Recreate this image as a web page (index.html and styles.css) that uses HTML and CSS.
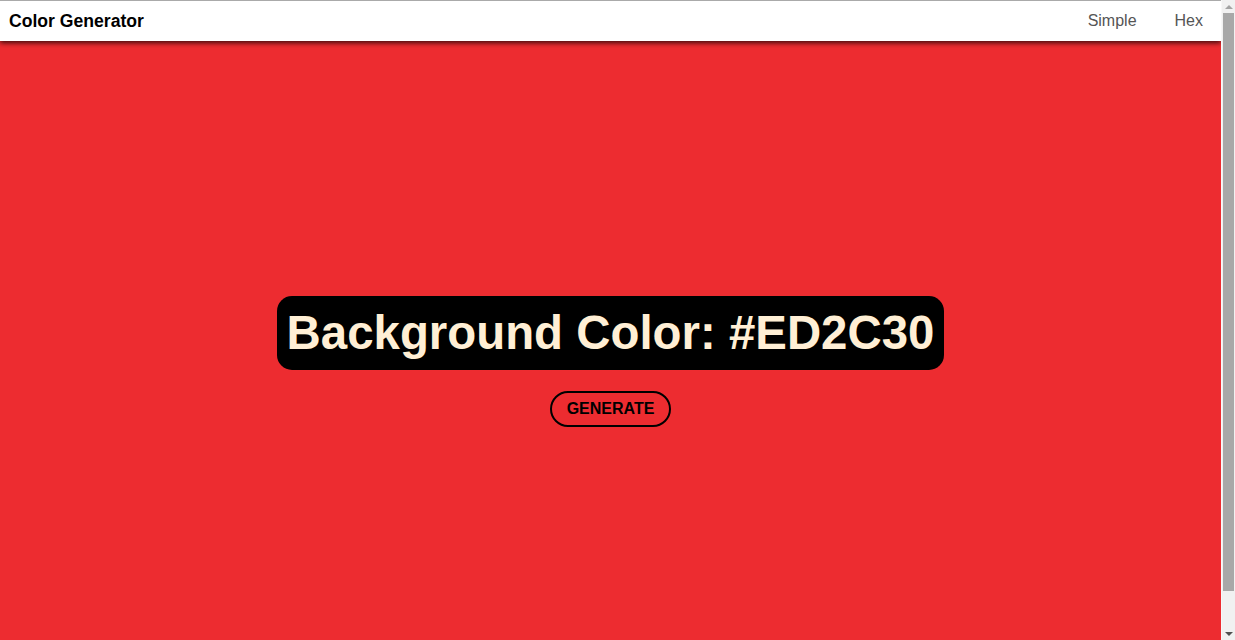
FILE: index.html
```html
<!DOCTYPE html>
<html lang="en">
<head>
<meta charset="utf-8">
<title>Color Generator</title>
<link rel="stylesheet" href="styles.css">
</head>
<body>
<div class="page">
  <nav class="navbar">
    <div class="brand">Color Generator</div>
    <div class="links">
      <a class="link" href="#">Simple</a>
      <a class="link" href="#">Hex</a>
    </div>
  </nav>
  <main class="main">
    <h2 class="color-label">Background Color: <span class="color-value">#ED2C30</span></h2>
    <button class="btn" type="button">GENERATE</button>
  </main>
</div>
<div class="scrollbar" aria-hidden="true">
  <div class="sb-arrow sb-up"></div>
  <div class="sb-track"><div class="sb-thumb"></div></div>
  <div class="sb-arrow sb-down"></div>
</div>
</body>
</html>
```
FILE: styles.css
```css
* { box-sizing: border-box; }
html, body {
  margin: 0;
  padding: 0;
}
body {
  font-family: "Liberation Sans", Arial, sans-serif;
  background: #ED2C30;
}
.page {
  margin-right: 14px;
}
.navbar {
  position: relative;
  z-index: 1;
  height: 41px;
  background: #fff;
  border-top: 1px solid #aaa;
  display: flex;
  align-items: center;
  justify-content: space-between;
  padding: 0 18px 0 9px;
  box-shadow: 0 2px 5px rgba(0, 0, 0, 0.75);
}
.brand {
  font-size: 17.6px;
  font-weight: bold;
  color: #000;
}
.links {
  display: flex;
  gap: 38px;
}
.link {
  font-size: 16px;
  color: #555;
  text-decoration: none;
}
.main {
  height: 100vh;
  display: flex;
  flex-direction: column;
  align-items: center;
  justify-content: center;
  gap: 21px;
}
.color-label {
  margin: 0;
  background: #000;
  color: #FFEFD5;
  font-size: 47.4px;
  font-weight: bold;
  line-height: 54px;
  padding: 10px 10px;
  border-radius: 15px;
}
.btn {
  font-family: "Liberation Sans", Arial, sans-serif;
  font-size: 16px;
  font-weight: bold;
  line-height: 18px;
  color: #000;
  background: transparent;
  border: 2px solid #000;
  border-radius: 20px;
  padding: 7px 15px;
  cursor: pointer;
}

/* browser scrollbar (drawn, the page is taller than the window) */
.scrollbar {
  position: fixed;
  top: 0;
  right: 0;
  bottom: 0;
  width: 14px;
  background: #f1f1f1;
  border-left: 1px solid #f8f8f8;
  display: flex;
  flex-direction: column;
  z-index: 5;
}
.sb-arrow {
  height: 13px;
  display: flex;
  align-items: center;
  justify-content: center;
}
.sb-up::before,
.sb-down::before {
  content: "";
  width: 0;
  height: 0;
  border-left: 4px solid transparent;
  border-right: 4px solid transparent;
}
.sb-up::before {
  border-bottom: 4px solid #a3a3a3;
}
.sb-down::before {
  border-top: 4px solid #505050;
}
.sb-track {
  flex: 1;
  padding: 0 1px 0 1px;
}
.sb-thumb {
  height: 578px;
  background: #a8a8a8;
}
```
